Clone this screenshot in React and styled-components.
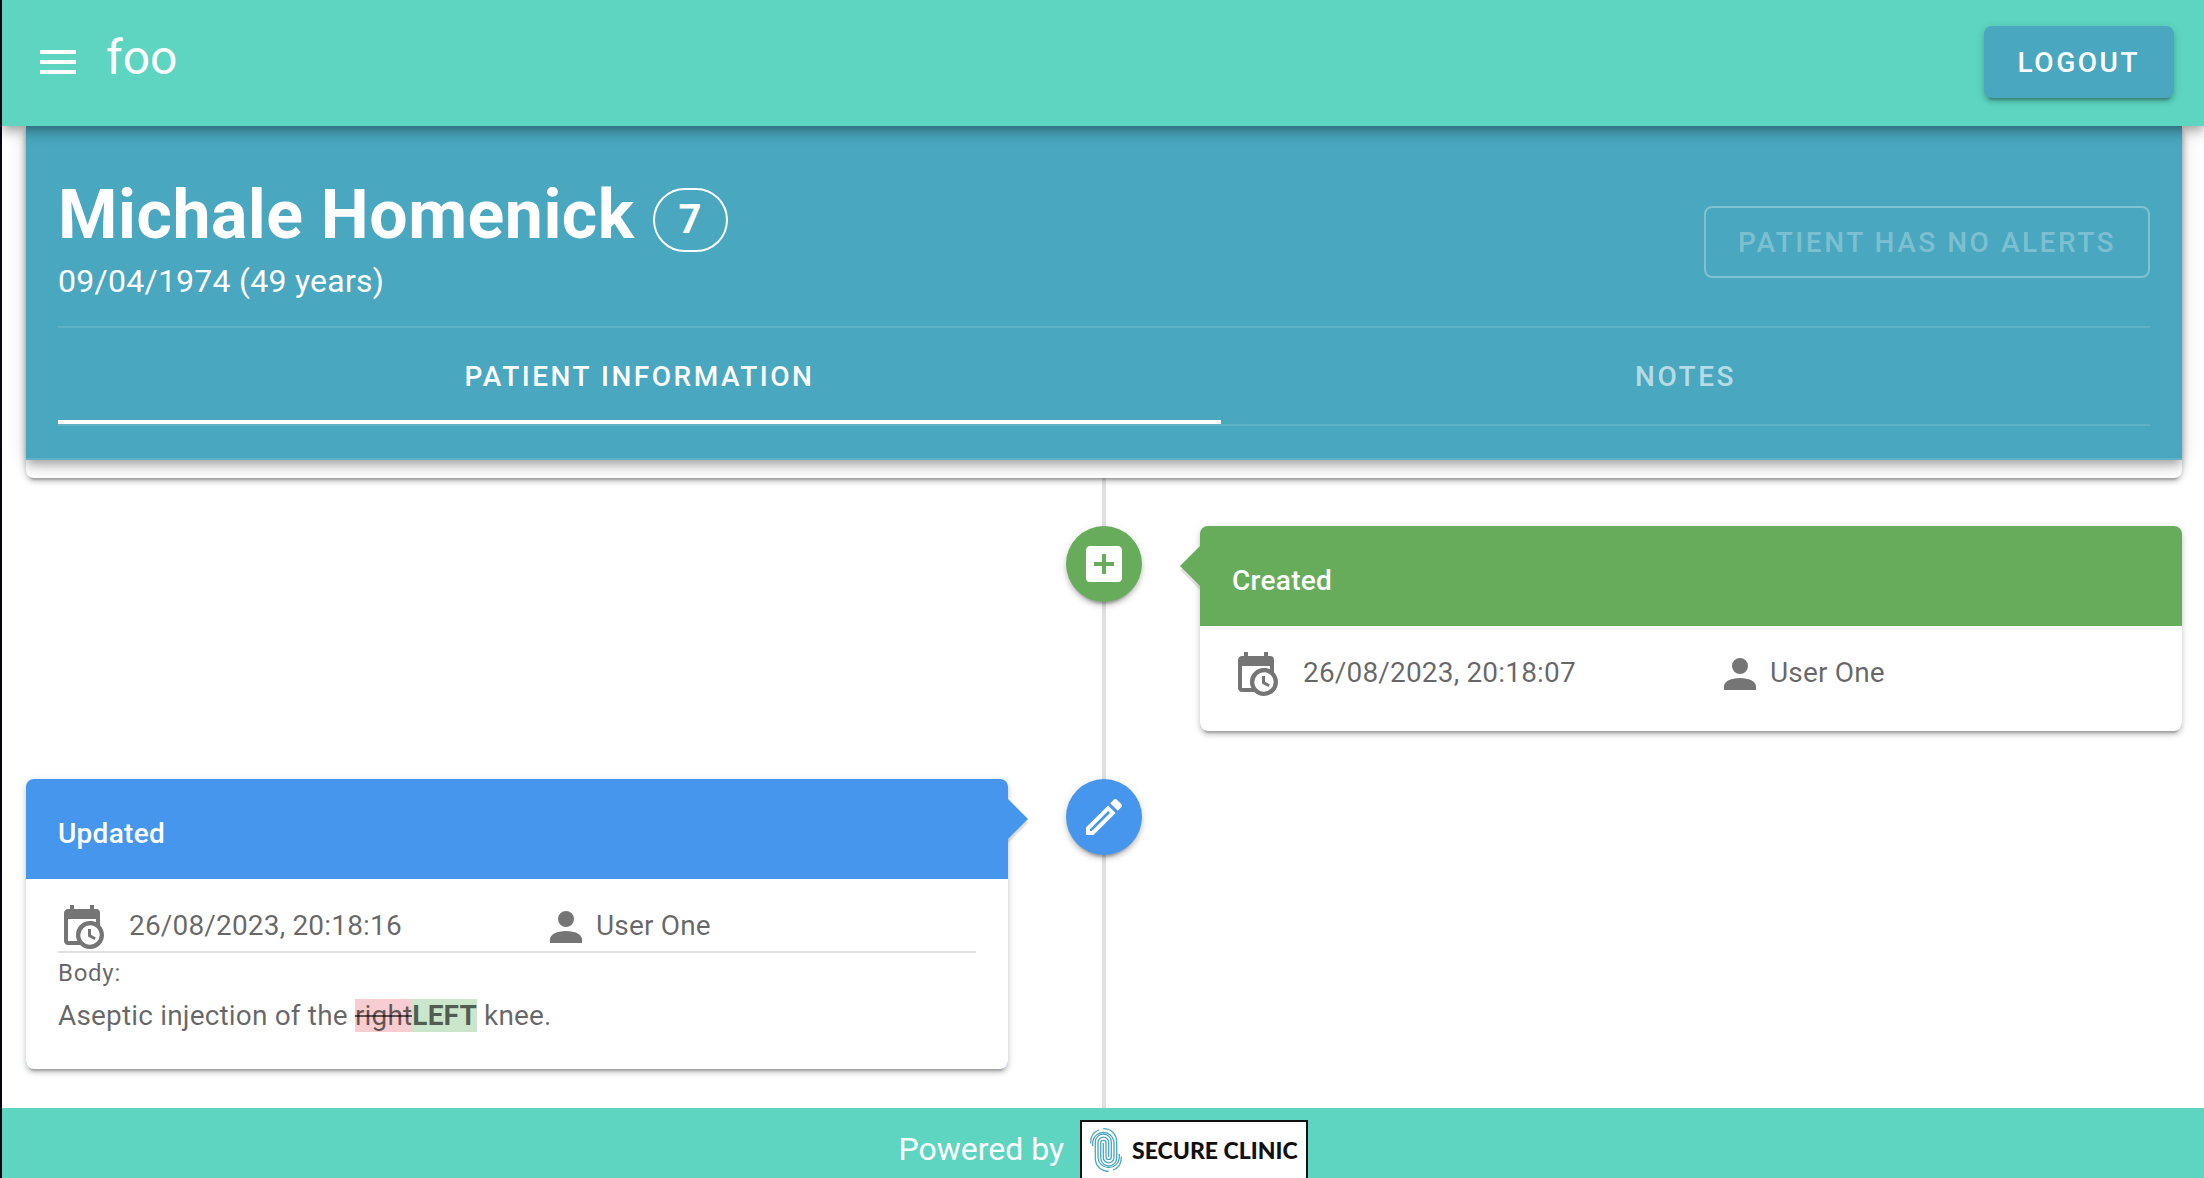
import React from "react";
import styled, { createGlobalStyle } from "styled-components";

const colors = {
  primary: "#5dd5c1",
  secondary: "#49a7bf",
  success: "#67ac5b",
  info: "#4796ed",
  text: "rgba(0, 0, 0, 0.6)",
  icon: "rgba(0, 0, 0, 0.54)",
  line: "rgba(0, 0, 0, 0.12)",
  lineOnDark: "rgba(255, 255, 255, 0.12)",
};

const elevation2 =
  "0 6px 2px -4px rgba(0,0,0,.2), 0 4px 4px 0 rgba(0,0,0,.14), 0 2px 10px 0 rgba(0,0,0,.12)";
const elevation4 =
  "0 4px 8px -2px rgba(0,0,0,.2), 0 8px 10px 0 rgba(0,0,0,.14), 0 2px 20px 0 rgba(0,0,0,.12)";

const GlobalStyle = createGlobalStyle`
  *, *::before, *::after { box-sizing: border-box; }
  body {
    margin: 0;
    background: #fff;
    color: ${colors.text};
    font-family: Roboto, "Liberation Sans", sans-serif;
    font-size: 28px;
    line-height: 40px;
  }
  h1, h2, p { margin: 0; }
  button { font-family: inherit; }
`;

const Shell = styled.div`
  display: flex;
  flex-direction: column;
  height: 100vh;
  overflow: hidden;
  border-left: 2px solid #05060f;
`;

const AppBar = styled.header`
  display: flex;
  flex: none;
  align-items: center;
  position: relative;
  z-index: 2;
  height: 126px;
  padding: 0 30px 2px 32px;
  background: ${colors.primary};
  color: #fff;
  box-shadow: ${elevation4};
`;

const MenuButton = styled.button`
  display: flex;
  padding: 0;
  border: 0;
  background: none;
  color: inherit;
`;

const AppTitle = styled.div`
  flex: 1;
  padding: 0 0 8px 24px;
  font-size: 48px;
  line-height: 64px;
`;

const Button = styled.button`
  height: 72px;
  padding: 0 32px;
  border: 2px solid ${(p) => (p.$outlined ? "currentColor" : colors.secondary)};
  border-radius: 8px;
  background: ${(p) => (p.$outlined ? "transparent" : colors.secondary)};
  color: ${(p) => (p.disabled ? "rgba(255, 255, 255, 0.3)" : "#fff")};
  box-shadow: ${(p) => (p.$outlined ? "none" : elevation2)};
  font-size: 28px;
  font-weight: 500;
  letter-spacing: 0.09em;
  text-transform: uppercase;
  white-space: nowrap;
`;

const Main = styled.main`
  display: flex;
  flex: 1;
  flex-direction: column;
  min-height: 0;
  overflow: hidden;
  padding: 0 22px 0 24px;
`;

const PatientCard = styled.section`
  flex: none;
  position: relative;
  z-index: 1;
  padding-bottom: 18px;
  border-radius: 0 0 8px 8px;
  background: #fff;
  box-shadow: ${elevation2};
`;

const PatientHeader = styled.div`
  padding: 52px 32px 32px;
  border-bottom: 2px solid ${colors.lineOnDark};
  background: ${colors.secondary};
  color: #fff;
  box-shadow: ${elevation4};
`;

const Summary = styled.div`
  display: flex;
  align-items: center;
  justify-content: space-between;
  padding-bottom: 20px;
  border-bottom: 2px solid ${colors.lineOnDark};
`;

const NameRow = styled.div`
  display: flex;
  align-items: center;
  gap: 18px;
  height: 80px;
`;

const Name = styled.h1`
  padding-bottom: 6px;
  font-size: 68px;
  font-weight: 700;
  letter-spacing: 0.007em;
  line-height: 80px;
`;

const Chip = styled.span`
  display: inline-flex;
  align-items: center;
  height: 64px;
  margin-top: 4px;
  padding: 0 24px;
  border: 2px solid #fff;
  border-radius: 32px;
  font-size: 40px;
  font-weight: 700;
`;

const BirthDate = styled.p`
  padding: 2px 0 4px;
  font-size: 32px;
  letter-spacing: 0.008em;
  line-height: 42px;
`;

const Tabs = styled.div`
  display: flex;
  border-bottom: 2px solid ${colors.lineOnDark};
`;

const Tab = styled.button`
  display: flex;
  flex: 1 1 auto;
  align-items: center;
  justify-content: center;
  height: 96px;
  padding: 4px 32px 0;
  border: 0;
  border-bottom: 4px solid ${(p) => (p.$active ? "#fff" : "transparent")};
  background: none;
  color: ${(p) => (p.$active ? "#fff" : "rgba(255, 255, 255, 0.6)")};
  font-size: 28px;
  font-weight: 500;
  letter-spacing: 0.09em;
  text-transform: uppercase;
`;

const TabLabel = styled.span`
  min-width: 116px;
  text-align: center;
`;

const Timeline = styled.section`
  display: flex;
  flex: 1;
  flex-direction: column;
  gap: 48px;
  padding-top: 48px;
  background: linear-gradient(#e0e0e0, #e0e0e0) center / 4px 100% no-repeat;
`;

const TimelineItem = styled.article`
  display: grid;
  grid-template-columns: minmax(0, 1fr) 192px minmax(0, 1fr);
  grid-template-areas: "before dot after";
  align-items: start;
`;

const Dot = styled.div`
  grid-area: dot;
  justify-self: center;
  display: flex;
  align-items: center;
  justify-content: center;
  width: 76px;
  height: 76px;
  border-radius: 50%;
  background: ${(p) => p.$color};
  color: #fff;
  box-shadow: ${elevation2};
`;

const EventCard = styled.div`
  grid-area: ${(p) => p.$side};
  position: relative;
  border-radius: 8px;
  background: ${(p) => p.$color};
  box-shadow: ${elevation2};

  &::before,
  &::after {
    content: "";
    position: absolute;
    top: 20px;
    ${(p) => (p.$side === "after" ? "right" : "left")}: 100%;
    border: 20px solid transparent;
    border-${(p) => (p.$side === "after" ? "left" : "right")}-width: 0;
    border-${(p) => (p.$side === "after" ? "right" : "left")}-color: ${(p) => p.$color};
  }

  &::before {
    top: 24px;
    border-${(p) => (p.$side === "after" ? "right" : "left")}-color: ${colors.line};
  }
`;

const EventTitle = styled.h2`
  padding: 35px 32px 25px;
  color: #fff;
  font-size: 28px;
  font-weight: 500;
  letter-spacing: 0.01em;
  line-height: 40px;
`;

const EventBody = styled.div`
  padding: 24px 32px 33px;
  border-radius: 0 0 8px 8px;
  background: #fff;
  letter-spacing: 0.006em;
`;

const Meta = styled.div`
  display: grid;
  grid-template-columns: 1fr 1fr;
  column-gap: 50px;
`;

const MetaItem = styled.div`
  display: flex;
  align-items: flex-start;
  gap: ${(p) => p.$gap}px;
  line-height: 46px;

  svg {
    color: ${colors.icon};
  }
`;

const Change = styled.div`
  border-top: 2px solid ${colors.line};
`;

const ChangeLabel = styled.p`
  font-size: 24px;
  letter-spacing: 0.03em;
  line-height: 40px;
`;

const ChangeText = styled.p`
  padding-top: 3px;
  line-height: 40px;
`;

const Removed = styled.del`
  background: #f8cdd2;
`;

const Added = styled.ins`
  background: #cce6cb;
  font-weight: 700;
  text-decoration: none;
`;

const Footer = styled.footer`
  display: flex;
  flex: none;
  align-items: flex-start;
  justify-content: center;
  gap: 16px;
  height: 70px;
  overflow: hidden;
  padding-top: 12px;
  background: ${colors.primary};
  color: #fff;
  font-size: 32px;
  line-height: 58px;
`;

const BrandLink = styled.a`
  display: flex;
  align-items: center;
  gap: 10px;
  height: 60px;
  padding: 0 8px;
  border: 2px solid #111;
  background: #fff;
  color: #111;
  font-family: Lato, Roboto, sans-serif;
  font-size: 23px;
  font-weight: 900;
  text-decoration: none;
  white-space: nowrap;
`;

const paths = {
  menu: "M3,6H21V8H3V6M3,11H21V13H3V11M3,16H21V18H3V16Z",
  plusBox:
    "M17,13H13V17H11V13H7V11H11V7H13V11H17M19,3H5C3.89,3 3,3.89 3,5V19A2,2 0 0,0 5,21H19A2,2 0 0,0 21,19V5C21,3.89 20.1,3 19,3Z",
  pencil:
    "M14.06,9L15,9.94L5.92,19H5V18.08L14.06,9M17.66,3C17.41,3 17.15,3.1 16.96,3.29L15.13,5.12L18.88,8.87L20.71,7.04C21.1,6.65 21.1,6 20.71,5.63L18.37,3.29C18.17,3.09 17.92,3 17.66,3M14.06,6.19L3,17.25V21H6.75L17.81,9.94L14.06,6.19Z",
  account:
    "M12,4A4,4 0 0,1 16,8A4,4 0 0,1 12,12A4,4 0 0,1 8,8A4,4 0 0,1 12,4M12,14C16.42,14 20,15.79 20,18V20H4V18C4,15.79 7.58,14 12,14Z",
  calendarClock:
    "M15,13H16.5V15.82L18.94,17.23L18.19,18.53L15,16.69V13M19,8H5V19H9.67C9.24,18.09 9,17.07 9,16A7,7 0 0,1 16,9C17.07,9 18.09,9.24 19,9.67V8M5,21C3.89,21 3,20.1 3,19V5C3,3.89 3.89,3 5,3H6V1H8V3H16V1H18V3H19A2,2 0 0,1 21,5V11.1C22.24,12.36 23,14.09 23,16A7,7 0 0,1 16,23C14.09,23 12.36,22.24 11.1,21H5M16,11.15A4.85,4.85 0 0,0 11.15,16C11.15,18.68 13.32,20.85 16,20.85A4.85,4.85 0 0,0 20.85,16C20.85,13.32 18.68,11.15 16,11.15Z",
};

function Icon({ name }) {
  return (
    <svg width="48" height="48" viewBox="0 0 24 24" fill="currentColor" aria-hidden="true">
      <path d={paths[name]} />
    </svg>
  );
}

/* One half of the print: nested arches whose legs continue into the turned half. */
const ridges = [
  "M10.7 22V15A2.6 2.6 0 0 1 16 15V22",
  "M8 22V14.500A5.3 5.3 0 0 1 18.7 14.500V22",
  "M5.3 22V14A8 8 0 0 1 21.3 14V22",
  "M2.7 18V14A10.7 10.7 0 0 1 24 14V22",
  "M0.700 15.500V14C0.700 7 5 3.500 9 2",
  "M13.3 0.700C20.500 0.700 26.700 5.500 26.700 14V22",
];

function Fingerprint() {
  return (
    <svg
      width="32"
      height="44"
      viewBox="0 0 32 44"
      fill="none"
      stroke="#49a7bf"
      strokeWidth="1.3"
      aria-hidden="true"
    >
      <path d="M13.3 15V29A2.600 2.600 0 0 0 18.600 29V22M18.7 29V22" stroke="none" />
      {[0, 180].map((turn) => (
        <g key={turn} transform={`rotate(${turn} 16 22)`}>
          {ridges.map((d) => (
            <path key={d} d={d} />
          ))}
          <path d="M13.3 15V22" />
        </g>
      ))}
    </svg>
  );
}

function EventMeta({ date, user }) {
  return (
    <Meta>
      <MetaItem $gap={23}>
        <Icon name="calendarClock" />
        <time>{date}</time>
      </MetaItem>
      <MetaItem $gap={6}>
        <Icon name="account" />
        <span>{user}</span>
      </MetaItem>
    </Meta>
  );
}

function TimelineEvent({ title, color, icon, side, date, user, children }) {
  return (
    <TimelineItem>
      <Dot $color={color}>
        <Icon name={icon} />
      </Dot>
      <EventCard $side={side} $color={color}>
        <EventTitle>{title}</EventTitle>
        <EventBody>
          <EventMeta date={date} user={user} />
          {children}
        </EventBody>
      </EventCard>
    </TimelineItem>
  );
}

export default function App() {
  return (
    <>
      <GlobalStyle />
      <Shell>
        <AppBar>
          <MenuButton type="button" aria-label="Menu">
            <Icon name="menu" />
          </MenuButton>
          <AppTitle>foo</AppTitle>
          <Button type="button">Logout</Button>
        </AppBar>
        <Main>
          <PatientCard>
            <PatientHeader>
              <Summary>
                <div>
                  <NameRow>
                    <Name>Michale Homenick</Name>
                    <Chip>7</Chip>
                  </NameRow>
                  <BirthDate>09/04/1974 (49 years)</BirthDate>
                </div>
                <Button type="button" $outlined disabled>
                  Patient has no alerts
                </Button>
              </Summary>
              <Tabs role="tablist">
                <Tab type="button" role="tab" aria-selected="true" $active>
                  <TabLabel>Patient Information</TabLabel>
                </Tab>
                <Tab type="button" role="tab" aria-selected="false">
                  <TabLabel>Notes</TabLabel>
                </Tab>
              </Tabs>
            </PatientHeader>
          </PatientCard>
          <Timeline>
            <TimelineEvent
              title="Created"
              color={colors.success}
              icon="plusBox"
              side="after"
              date="26/08/2023, 20:18:07"
              user="User One"
            />
            <TimelineEvent
              title="Updated"
              color={colors.info}
              icon="pencil"
              side="before"
              date="26/08/2023, 20:18:16"
              user="User One"
            >
              <Change>
                <ChangeLabel>Body:</ChangeLabel>
                <ChangeText>
                  Aseptic injection of the <Removed>right</Removed>
                  <Added>LEFT</Added> knee.
                </ChangeText>
              </Change>
            </TimelineEvent>
          </Timeline>
        </Main>
        <Footer>
          <span>Powered by</span>
          <BrandLink href="#">
            <Fingerprint />
            SECURE CLINIC
          </BrandLink>
        </Footer>
      </Shell>
    </>
  );
}
